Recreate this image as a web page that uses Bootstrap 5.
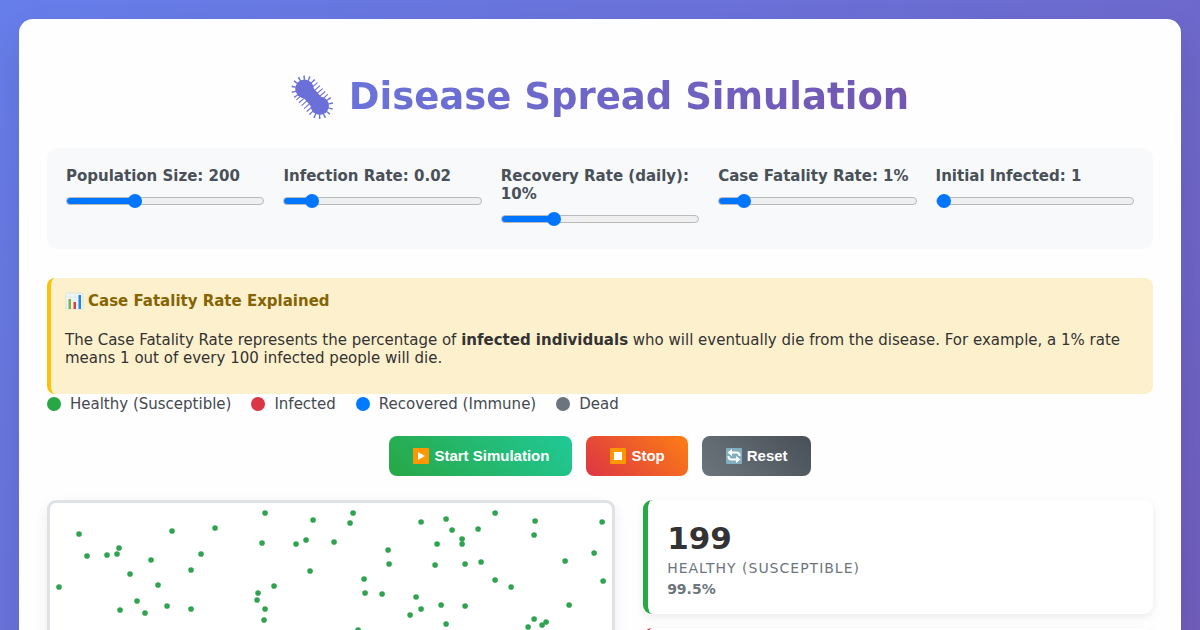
<!DOCTYPE html>
<html lang="en">
<head>
<meta charset="utf-8">
<meta name="viewport" content="width=device-width, initial-scale=1">
<title>Disease Spread Simulation</title>
<link href="https://cdn.jsdelivr.net/npm/bootstrap@5.3.0/dist/css/bootstrap.min.css" rel="stylesheet">
<style>
  body { font-family: "DejaVu Sans", Verdana, sans-serif; font-size: 15px; line-height: 18px; color: #333; padding: 19px;
    background: linear-gradient(135deg, #667eea 0%, #764ba2 100%); }
  .sim-page { background: #fefefe; border-radius: 14px; padding: 28px; min-height: 260vh; box-shadow: 0 19px 38px rgba(0,0,0,.1); }
  .sim-title { font-size: 37px; line-height: 44px; font-weight: 700; margin: 28px 0 29px; }
  .sim-title span { background: linear-gradient(135deg, #6a74dc, #7355ae); -webkit-background-clip: text; background-clip: text; color: transparent; }
  .sim-controls { display: grid; grid-template-columns: repeat(5, minmax(0, 1fr)); gap: 19px; background: #f7f9fb; border-radius: 11px; padding: 19px 19px 23px; margin-bottom: 29px; }
  .sim-controls label { display: block; font-weight: 600; color: #495057; margin-bottom: 9px; }
  .sim-range { -webkit-appearance: none; appearance: none; display: block; width: 100%; height: 14px; margin: 0; background: none; }
  .sim-range::-webkit-slider-runnable-track { height: 8px; border: 1px solid #b9babb; border-radius: 4px;
    background: linear-gradient(#0075ff, #0075ff) 0 0 / var(--fill) 100% no-repeat border-box, #efefef; }
  .sim-range::-webkit-slider-thumb { -webkit-appearance: none; width: 14px; height: 14px; margin-top: -4px; border-radius: 50%; background: #0075ff; }
  .sim-info { background: #fdf0cd; border-left: 4px solid #ffc107; border-radius: 8px; padding: 14px 14px 27px; }
  .sim-info h2 { font-size: 15px; line-height: 18px; font-weight: 700; color: #856404; margin: 0 0 21px; }
  .sim-legend { gap: 20px; color: #444a50; margin: 1px 0 23px; }
  .sim-dot { width: 14px; height: 14px; border-radius: 50%; margin-right: 9px; }
  .healthy { background: #28a745; } .infected { background: #dc3545; } .recovered { background: #007bff; } .dead { background: #6c757d; }
  .sim-actions { gap: 14px; }
  .sim-btn { font: 700 15px/18px "Liberation Sans", Arial, sans-serif; color: #fff; border: 0; border-radius: 8px; padding: 11px 23px; }
  .sim-btn:hover { color: #fff; }
  .go { background: linear-gradient(45deg, #28a745, #20c997); }
  .halt { background: linear-gradient(45deg, #dc3545, #fd7e14); }
  .again { background: linear-gradient(45deg, #6c757d, #495057); }
  .sim-main { display: grid; grid-template-columns: 39fr 35fr; gap: 28px; margin-top: 24px; align-items: start; }
  .sim-field { display: block; width: 100%; border: 3px solid #dee2e6; border-radius: 9px; background: #fff; box-shadow: 0 5px 14px rgba(0,0,0,.07); }
  .sim-stats { gap: 14px; }
  .sim-stat { background: #fff; border-left: 5px solid #28a745; border-radius: 9px; padding: 19px 19px 17px; box-shadow: 0 3px 10px rgba(0,0,0,.08); }
  .sim-stat.ill { border-color: #dc3545; }
  .sim-count { font-size: 31px; line-height: 38px; font-weight: 700; }
  .sim-name { font-size: 14px; line-height: 16px; letter-spacing: 1px; color: #6c757d; margin-top: 3px; }
  .sim-share { font-size: 14px; line-height: 16px; font-weight: 700; color: #6c757d; margin-top: 5px; }
</style>
</head>
<body>
<main class="sim-page">
  <h1 class="sim-title d-flex justify-content-center align-items-center">
    <svg class="me-3" width="42" height="44" viewBox="0 0 42 44" aria-hidden="true">
      <path fill="none" stroke="#6a70d8" stroke-width="9" stroke-dasharray="1.1 2.8" d="M7.200 20.100A9 9 0 0 1 20.800 8.100L35.300 24.500A9 9 0 0 1 21.700 36.500Z"/>
      <path stroke="#6a70d8" stroke-width="14" d="M14 14 28.500 30.500"/>
      <circle cx="13.500" cy="13.800" r="9.300" fill="#6a70d8"/>
      <circle cx="28.800" cy="30.700" r="9.200" fill="#6a70d8"/>
    </svg>
    <span>Disease Spread Simulation</span>
  </h1>

  <section class="sim-controls">
    <div><label for="pop">Population Size: 200</label><input class="sim-range" style="--fill:34%" type="range" id="pop" min="50" max="500" value="200"></div>
    <div><label for="inf">Infection Rate: 0.02</label><input class="sim-range" style="--fill:14%" type="range" id="inf" min="0.01" max="0.1" step="0.01" value="0.02"></div>
    <div><label for="rec">Recovery Rate (daily): 10%</label><input class="sim-range" style="--fill:27%" type="range" id="rec" min="3" max="31" value="10"></div>
    <div><label for="cfr">Case Fatality Rate: 1%</label><input class="sim-range" style="--fill:13%" type="range" id="cfr" min="0" max="10" step="0.1" value="1"></div>
    <div><label for="ini">Initial Infected: 1</label><input class="sim-range" style="--fill:3%" type="range" id="ini" min="1" max="10" value="1"></div>
  </section>

  <section class="sim-info">
    <h2 class="d-flex align-items-center"><svg class="me-1" width="19" height="18" viewBox="0 0 19 18" aria-hidden="true"><path fill="#f3f7f7" stroke="#c9d8dc" stroke-width=".6" d="M1 1h17v16H1z"/><path stroke="#d5e2e6" stroke-width=".6" d="M1 5h17M1 9h17M1 13h17M5 1v16M10 1v16M14 1v16"/><path fill="#7cb342" d="M3.500 7H6v10H3.500z"/><path fill="#e53935" d="M8.500 10H11v7H8.500z"/><path fill="#1e88e5" d="M13.500 3H16v14h-2.500z"/></svg>Case Fatality Rate Explained</h2>
    <p class="mb-0">The Case Fatality Rate represents the percentage of <strong>infected individuals</strong> who will eventually die from the disease. For example, a 1% rate means 1 out of every 100 infected people will die.</p>
  </section>

  <div class="sim-legend d-flex flex-wrap">
    <div class="d-flex align-items-center"><span class="sim-dot healthy"></span>Healthy (Susceptible)</div>
    <div class="d-flex align-items-center"><span class="sim-dot infected"></span>Infected</div>
    <div class="d-flex align-items-center"><span class="sim-dot recovered"></span>Recovered (Immune)</div>
    <div class="d-flex align-items-center"><span class="sim-dot dead"></span>Dead</div>
  </div>

  <div class="sim-actions d-flex justify-content-center flex-wrap">
    <button type="button" class="btn sim-btn go d-flex align-items-center"><svg class="me-1" width="18" height="16" viewBox="0 0 18 16" aria-hidden="true"><rect x="1" width="16" height="16" rx="1" fill="#ff9800"/><path fill="#fff" d="M6 4 13 8 6 12z"/></svg>Start Simulation</button>
    <button type="button" class="btn sim-btn halt d-flex align-items-center"><svg class="me-1" width="18" height="16" viewBox="0 0 18 16" aria-hidden="true"><rect x="1" width="16" height="16" rx="1" fill="#ff9800"/><path fill="#fff" d="M5 4h8v8H5z"/></svg>Stop</button>
    <button type="button" class="btn sim-btn again d-flex align-items-center"><svg class="me-1" width="18" height="16" viewBox="0 0 18 16" aria-hidden="true"><rect x="1" width="16" height="16" rx="1" fill="#82aec0"/><path fill="none" stroke="#fff" stroke-width="2" d="M6 4.500h5.500q3 0 3 3V8M12 11.500H6.500q-3 0-3-3V8"/><path fill="#fff" d="M7 1v7L2.500 4.500zM11 8v7l4.500-3.500z"/></svg>Reset</button>
  </div>

  <div class="sim-main">
    <svg class="sim-field" viewBox="0 0 562 375" role="img" aria-label="Population field"><g id="people" fill="#2fa350"></g></svg>
    <div class="sim-stats d-grid">
      <div class="sim-stat"><div class="sim-count">199</div><div class="sim-name text-uppercase">Healthy (Susceptible)</div><div class="sim-share">99.5%</div></div>
      <div class="sim-stat ill"><div class="sim-count">1</div><div class="sim-name text-uppercase">Infected</div><div class="sim-share">0.5%</div></div>
    </div>
  </div>
</main>
<script src="https://cdn.jsdelivr.net/npm/bootstrap@5.3.0/dist/js/bootstrap.bundle.min.js"></script>
<script>
  // Each pair is one person's place in the field
  const people = [[215,10],[263,17],[29,31],[122,28],[165,25],[69,45],[37,53],[57,52],[67,51],[101,57],[151,51],[212,40],[246,41],[256,37],[284,39],[141,67],[80,71],[9,84],[108,82],[260,68],[224,83],[208,90],[207,97],[87,98],[70,107],[95,110],[117,103],[141,106],[215,106],[214,117],[303,10],[300,20],[371,19],[396,16],[402,27],[428,26],[445,10],[485,18],[484,32],[552,19],[387,41],[412,36],[412,41],[338,47],[339,61],[385,62],[415,61],[431,59],[515,58],[544,50],[445,77],[461,84],[553,78],[314,76],[315,90],[332,91],[366,94],[371,106],[360,112],[391,102],[415,103],[519,102],[396,121],[484,116],[496,119],[492,122],[478,124],[308,127]];
  const field = document.getElementById('people');
  for (const [x, y] of people) {
    const c = document.createElementNS('http://www.w3.org/2000/svg', 'circle');
    c.setAttribute('cx', x); c.setAttribute('cy', y); c.setAttribute('r', 2.8);
    field.append(c);
  }
</script>
</body>
</html>
